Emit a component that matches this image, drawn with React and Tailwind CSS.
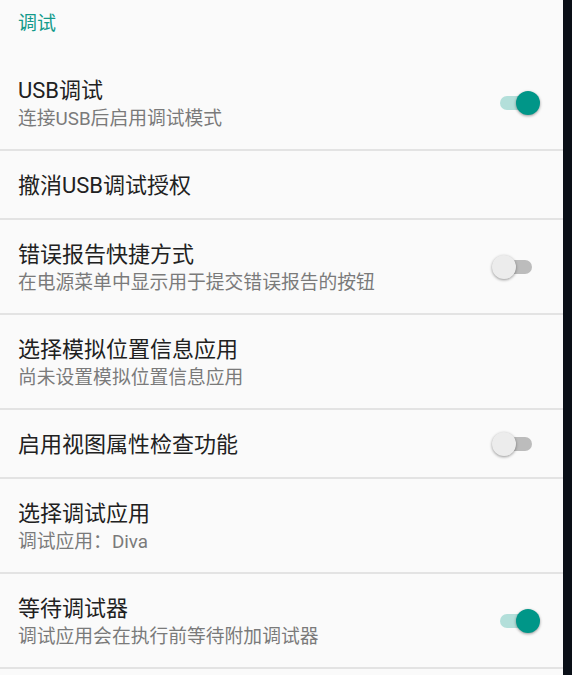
import React from "react";

const rows = [
  { title: "USB调试", sub: "连接USB后启用调试模式", toggle: true },
  { title: "撤消USB调试授权" },
  { title: "错误报告快捷方式", sub: "在电源菜单中显示用于提交错误报告的按钮", toggle: false },
  { title: "选择模拟位置信息应用", sub: "尚未设置模拟位置信息应用" },
  { title: "启用视图属性检查功能", toggle: false },
  { title: "选择调试应用", sub: "调试应用：Diva" },
  { title: "等待调试器", sub: "调试应用会在执行前等待附加调试器", toggle: true },
];

const Switch = ({ on }) => {
  return (
    <div className="relative w-[48px] h-[24px] shrink-0">
      <div
        className={
          on
            ? "absolute left-[8px] right-[8px] top-[5px] h-[14px] rounded-full bg-[#b3dfda]"
            : "absolute left-[8px] right-[8px] top-[5px] h-[14px] rounded-full bg-[#bcbcbc]"
        }
      />
      <div
        className={
          on
            ? "absolute right-0 top-0 w-[24px] h-[24px] rounded-full bg-[#009688] shadow-[0_1px_3px_rgba(0,0,0,0.4)]"
            : "absolute left-0 top-0 w-[24px] h-[24px] rounded-full bg-[#ececec] shadow-[0_1px_3px_rgba(0,0,0,0.4)]"
        }
      />
    </div>
  );
};

const Row = ({ title, sub, toggle }) => {
  return (
    <div>
      <div
        className={
          sub
            ? "flex items-center h-[93px] pl-[18px] pr-[23px]"
            : "flex items-center h-[67px] pl-[18px] pr-[23px]"
        }
      >
        <div className={sub ? "flex-1 pt-[5px]" : "flex-1 pt-[2px]"}>
          <div className="text-[22px] leading-[28px] text-[#212121]">{title}</div>
          {sub && (
            <div className="text-[18.8px] leading-[28px] text-[#7a7a7a]">{sub}</div>
          )}
        </div>
        {toggle !== undefined && <Switch on={toggle} />}
      </div>
      <div className="h-[2px] bg-[#e3e3e3]" />
    </div>
  );
};

const App = () => {
  return (
    <div
      className="flex w-[572px] h-[675px] overflow-hidden bg-[#0a0f17]"
      style={{ fontFamily: "Roboto, 'Noto Sans CJK SC', sans-serif" }}
    >
      <div className="w-[563px] h-full bg-[#fafafa]">
        <div className="h-[56px] pl-[18px] pt-[10px] text-[19px] leading-[28px] text-[#139a8b]">
          调试
        </div>
        {rows.map((r) => (
          <Row key={r.title} {...r} />
        ))}
      </div>
    </div>
  );
};

export default App;
